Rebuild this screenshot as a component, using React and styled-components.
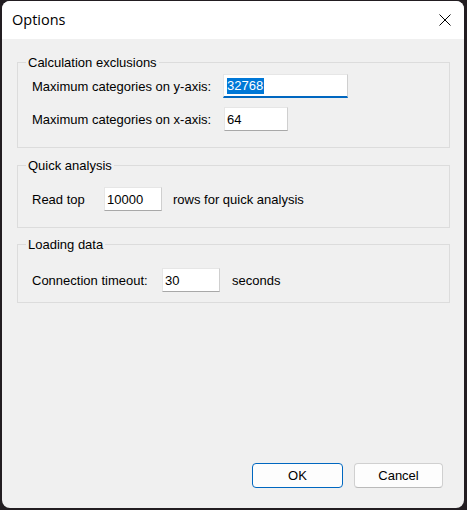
import React from "react";
import styled, { createGlobalStyle } from "styled-components";

const Global = createGlobalStyle`
  html, body { margin: 0; padding: 0; background: #221d21; }
  body { font-family: "Liberation Sans", Arial, sans-serif; }
  #root { width: 467px; height: 510px; overflow: hidden; }
`;

const Window = styled.div`
  margin: 1px 0 0 2px;
  width: 462px;
  height: 507px;
  border-radius: 8px;
  overflow: hidden;
  background: #f0f0f0;
  display: flex;
  flex-direction: column;
`;

const TitleBar = styled.div`
  height: 38px;
  flex: none;
  background: #ffffff;
  display: flex;
  align-items: center;
  justify-content: space-between;
  padding-left: 10px;
`;

const Title = styled.div`
  font-family: "Segoe UI", "Open Sans", sans-serif;
  font-size: 14.5px;
  color: #000;
  padding-bottom: 1px;
`;

const CloseButton = styled.div`
  width: 38px;
  height: 38px;
  display: flex;
  align-items: center;
  justify-content: center;
`;

const Body = styled.div`
  flex: 1;
  display: flex;
  flex-direction: column;
  padding: 16px 14px 20px 15px;
`;

const Group = styled.fieldset`
  margin: ${(p) => p.$mt || 0}px 0 0 0;
  padding: 0;
  min-width: 0;
  border: 1px solid #dcdcdc;
`;

const Legend = styled.legend`
  margin-left: 8px;
  padding: 0 2px;
  font-size: 13px;
  line-height: 15px;
  color: #000;
`;

const GroupContent = styled.div`
  display: flex;
  flex-direction: column;
  gap: 9px;
  padding: ${(p) => p.$pt}px 14px ${(p) => p.$pb}px 14px;
`;

const Row = styled.div`
  display: flex;
  align-items: center;
  height: 24px;
`;

const Label = styled.span`
  flex: none;
  width: ${(p) => (p.$w ? `${p.$w}px` : "auto")};
  margin-left: ${(p) => p.$ml || 0}px;
  font-size: 13px;
  color: #000;
  white-space: nowrap;
`;

const TextBox = styled.div`
  box-sizing: border-box;
  width: ${(p) => p.$w}px;
  height: 24px;
  margin-left: ${(p) => p.$ml || 0}px;
  display: flex;
  align-items: center;
  padding: ${(p) => (p.$focused ? "0 0 0 3px" : "0 0 0 2px")};
  background: #ffffff;
  border: 1px solid #e6e6e6;
  border-right-color: #cfcfcf;
  border-bottom: ${(p) => (p.$focused ? "2px solid #0067c0" : "1px solid #a8a8a8")};
  font-size: 13px;
  color: #000;
`;

const Selection = styled.span`
  background: #0078d7;
  color: #ffffff;
  line-height: 16px;
  padding: 0 1px 0 0;
`;

const ButtonBar = styled.div`
  margin-top: auto;
  display: flex;
  justify-content: flex-end;
  gap: 11px;
  padding-right: 7px;
`;

const Button = styled.button`
  box-sizing: border-box;
  width: ${(p) => p.$w}px;
  height: 25px;
  border-radius: 4px;
  background: #fdfdfd;
  border: 1px solid ${(p) => (p.$primary ? "#0067c0" : "#d0d0d0")};
  border-bottom-color: ${(p) => (p.$primary ? "#0067c0" : "#bababa")};
  font-family: "Liberation Sans", Arial, sans-serif;
  font-size: 13px;
  color: #000;
  padding: 0;
`;

export default function App() {
  return (
    <>
      <Global />
      <Window>
        <TitleBar>
          <Title>Options</Title>
          <CloseButton>
            <svg width="12" height="12" viewBox="0 0 12 12">
              <path d="M0.5 0.5 L11.5 11.5 M11.5 0.5 L0.5 11.5" stroke="#000" strokeWidth="1" />
            </svg>
          </CloseButton>
        </TitleBar>
        <Body>
          <Group>
            <Legend>Calculation exclusions</Legend>
            <GroupContent $pt={4} $pb={16}>
              <Row>
                <Label $w={191}>Maximum categories on y-axis:</Label>
                <TextBox $w={125} $focused>
                  <Selection>32768</Selection>
                </TextBox>
              </Row>
              <Row>
                <Label $w={191}>Maximum categories on x-axis:</Label>
                <TextBox $w={64} $ml={1}>64</TextBox>
              </Row>
            </GroupContent>
          </Group>
          <Group $mt={10}>
            <Legend>Quick analysis</Legend>
            <GroupContent $pt={14} $pb={16}>
              <Row>
                <Label $w={72}>Read top</Label>
                <TextBox $w={58}>10000</TextBox>
                <Label $ml={11}>rows for quick analysis</Label>
              </Row>
            </GroupContent>
          </Group>
          <Group $mt={9}>
            <Legend>Loading data</Legend>
            <GroupContent $pt={16} $pb={10}>
              <Row>
                <Label $w={130}>Connection timeout:</Label>
                <TextBox $w={58}>30</TextBox>
                <Label $ml={12}>seconds</Label>
              </Row>
            </GroupContent>
          </Group>
          <ButtonBar>
            <Button $w={91} $primary>OK</Button>
            <Button $w={89}>Cancel</Button>
          </ButtonBar>
        </Body>
      </Window>
    </>
  );
}
